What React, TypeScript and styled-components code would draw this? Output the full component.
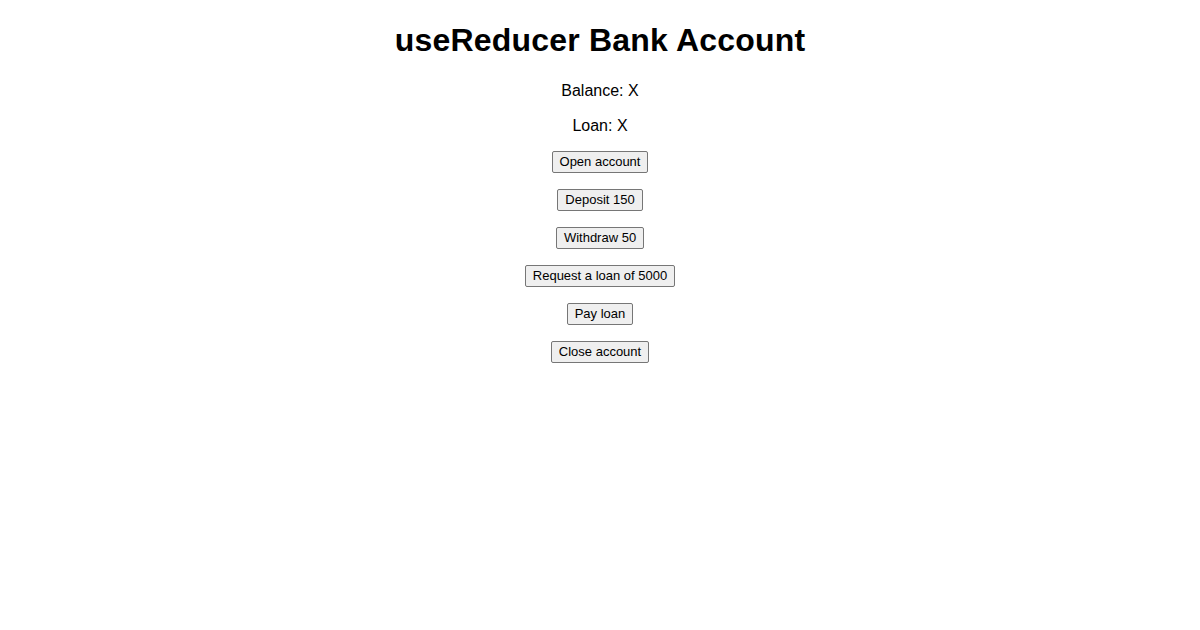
import React from "react";
import styled, { createGlobalStyle } from "styled-components";

const Global = createGlobalStyle`
  body {
    margin: 0;
    font-family: "Liberation Sans", Arial, sans-serif;
    color: #000;
    background: #fff;
  }
`;

const Page = styled.div`
  text-align: center;
`;

const Title = styled.h1`
  font-size: 32px;
  line-height: 38px;
  font-weight: bold;
  letter-spacing: 0.2px;
  margin: 21.44px 0;
`;

const Line = styled.p`
  font-size: 16px;
  line-height: 19px;
  margin: 16px 0;
`;

const ButtonRow = styled.p`
  display: flex;
  justify-content: center;
  height: 22px;
  margin: 16px 0;
`;

const Action = styled.button`
  font-family: "Liberation Sans", Arial, sans-serif;
  font-size: 13px;
  padding: 1px 7px;
  border: 1px solid #767676;
  border-radius: 2px;
  background: #efefef;
  color: #000;
  line-height: normal;
  height: 22px;
  cursor: pointer;
`;

const actions = [
  "Open account",
  "Deposit 150",
  "Withdraw 50",
  "Request a loan of 5000",
  "Pay loan",
  "Close account",
];

export default function App() {
  return (
    <Page>
      <Global />
      <Title>useReducer Bank Account</Title>
      <Line>Balance: X</Line>
      <Line>Loan: X</Line>
      {actions.map((a) => (
        <ButtonRow key={a}>
          <Action>{a}</Action>
        </ButtonRow>
      ))}
    </Page>
  );
}
